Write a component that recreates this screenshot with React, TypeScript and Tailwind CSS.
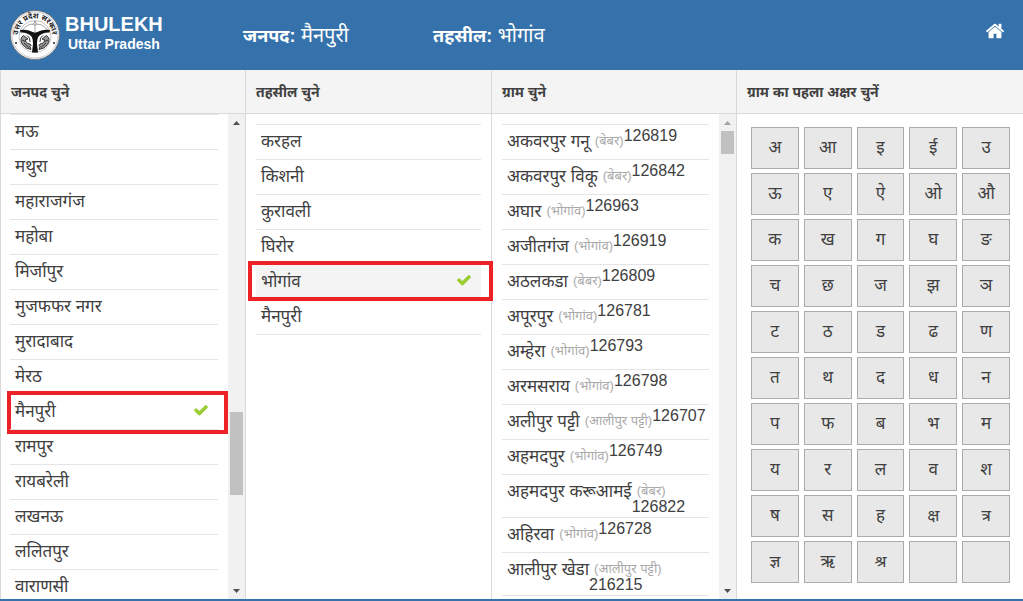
import { clsx } from 'clsx';

const districts = [
  'मऊ',
  'मथुरा',
  'महाराजगंज',
  'महोबा',
  'मिर्जापुर',
  'मुजफफर नगर',
  'मुरादाबाद',
  'मेरठ',
  'मैनपुरी',
  'रामपुर',
  'रायबरेली',
  'लखनऊ',
  'ललितपुर',
  'वाराणसी',
];

const tehsils = ['करहल', 'किशनी', 'कुरावली', 'घिरोर', 'भोगांव', 'मैनपुरी'];

const villages = [
  { name: 'अकवरपुर गनू', area: 'बेबर', code: '126819' },
  { name: 'अकवरपुर विकू', area: 'बेबर', code: '126842' },
  { name: 'अघार', area: 'भोगांव', code: '126963' },
  { name: 'अजीतगंज', area: 'भोगांव', code: '126919' },
  { name: 'अठलकडा', area: 'बेबर', code: '126809' },
  { name: 'अपूरपुर', area: 'भोगांव', code: '126781' },
  { name: 'अम्हेरा', area: 'भोगांव', code: '126793' },
  { name: 'अरमसराय', area: 'भोगांव', code: '126798' },
  { name: 'अलीपुर पट्टी', area: 'आलीपुर पट्टी', code: '126707' },
  { name: 'अहमदपुर', area: 'भोगांव', code: '126749' },
  { name: 'अहमदपुर करूआमई', area: 'बेबर', code: '126822' },
  { name: 'अहिरवा', area: 'भोगांव', code: '126728' },
  { name: 'आलीपुर खेडा', area: 'आलीपुर पट्टी', code: '216215' },
];

const letters = [
  'अ', 'आ', 'इ', 'ई', 'उ',
  'ऊ', 'ए', 'ऐ', 'ओ', 'औ',
  'क', 'ख', 'ग', 'घ', 'ङ',
  'च', 'छ', 'ज', 'झ', 'ञ',
  'ट', 'ठ', 'ड', 'ढ', 'ण',
  'त', 'थ', 'द', 'ध', 'न',
  'प', 'फ', 'ब', 'भ', 'म',
  'य', 'र', 'ल', 'व', 'श',
  'ष', 'स', 'ह', 'क्ष', 'त्र',
  'ज्ञ', 'ऋ', 'श्र', '', '',
];

function Emblem() {
  return (
    <svg viewBox="0 0 100 100" className="size-[50px] shrink-0" aria-hidden="true">
      <defs>
        <path id="emblem-arc" d="M18 62 A34 34 0 1 1 82 62" />
      </defs>
      <circle cx="50" cy="50" r="49" fill="#fff" stroke="#666" strokeWidth="1.5" />
      <circle cx="50" cy="50" r="46" fill="none" stroke="#999" strokeWidth="1" />
      <text fontSize="15" fontWeight="bold" fill="#222">
        <textPath href="#emblem-arc" startOffset="50%" textAnchor="middle">
          उत्तर प्रदेश सरकार
        </textPath>
      </text>
      <circle cx="50" cy="53" r="32" fill="none" stroke="#888" strokeWidth="1" />
      {/* bow and arrow */}
      <path d="M24 42 Q36 24 50 30 Q64 24 76 42" fill="none" stroke="#888" strokeWidth="1.5" />
      <path d="M50 22 V44 M46 28 L50 22 L54 28" fill="none" stroke="#888" strokeWidth="1.5" />
      {/* confluence */}
      <path
        d="M20 40 Q34 38 43 43 Q50 47 57 43 Q66 38 80 40 L79 45 Q66 44 58 52 Q54 56 54 68 L56 85 H44 L46 68 Q46 56 42 52 Q34 44 21 45 Z"
        fill="#111"
      />
      {/* fish */}
      <g fill="#999" stroke="#333" strokeWidth="2">
        <path d="M27 51 Q18 57 25 69 Q32 78 42 79 L40 73 Q44 71 40 68 Q31 67 31 59 L36 58 Z" />
        <path d="M73 51 Q82 57 75 69 Q68 78 58 79 L60 73 Q56 71 60 68 Q69 67 69 59 L64 58 Z" />
        <path d="M34 51 Q41 55 40 64 M66 51 Q59 55 60 64" fill="none" />
        <path d="M28 66 L38 75 M72 66 L62 75 M24 60 L31 63 M76 60 L69 63" fill="none" />
      </g>
      <circle cx="12" cy="66" r="2" fill="#222" />
      <circle cx="88" cy="66" r="2" fill="#222" />
    </svg>
  );
}

function HomeIcon() {
  return (
    <svg viewBox="0 0 1664 1792" className="h-5 w-5" fill="currentColor" aria-hidden="true">
      <path d="M1408 992v480q0 26-19 45t-45 19H960v-384H704v384H320q-26 0-45-19t-19-45V992q0-1 .5-3t.5-3l575-474 575 474q1 2 1 6zm223-69l-62 74q-8 9-21 11h-3q-13 0-21-7L832 424 140 1001q-12 8-24 7-13-2-21-11l-62-74q-8-10-7-23.5T37 878l719-599q32-26 76-26t76 26l244 204V288q0-14 9-23t23-9h192q14 0 23 9t9 23v408l219 182q10 8 11 21.5t-7 23.5z" />
    </svg>
  );
}

function CheckIcon() {
  return (
    <svg viewBox="0 0 1792 1792" className="mb-1 size-4 text-[#9acd32]" fill="currentColor" aria-hidden="true">
      <path d="M1671 566q0 40-28 68l-724 724-136 136q-28 28-68 28t-68-28l-136-136-362-362q-28-28-28-68t28-68l136-136q28-28 68-28t68 28l294 295 656-657q28-28 68-28t68 28l136 136q28 28 28 68z" />
    </svg>
  );
}

function Arrow({ up = false, dim = false }: { up?: boolean; dim?: boolean }) {
  return (
    <svg viewBox="0 0 17 17" className={clsx('size-[17px] shrink-0', dim ? 'text-[#a3a3a3]' : 'text-[#505050]')} fill="currentColor" aria-hidden="true">
      <path d={up ? 'M5 11 L8.5 7 L12 11Z' : 'M5 7 L8.5 11 L12 7Z'} />
    </svg>
  );
}

function ScrollBar({ thumb, atTop = false }: { thumb: string; atTop?: boolean }) {
  return (
    <div className="flex w-[17px] shrink-0 flex-col bg-[#f1f1f1]">
      <Arrow up dim={atTop} />
      <div className="flex-1 px-0.5">
        <div className={clsx('bg-[#c1c1c1]', thumb)} />
      </div>
      <Arrow />
    </div>
  );
}

function Heading({ children }: { children: string }) {
  return (
    <h2 className="flex h-11 shrink-0 items-center border-b border-[#d9d9d9] bg-[#f4f4f4] px-2.5 text-sm font-bold">
      {children}
    </h2>
  );
}

export default function App() {
  return (
    <div className="flex h-screen flex-col border-b-2 border-[#3572ab] bg-white font-['Liberation_Sans','Noto_Sans','Noto_Sans_Devanagari',sans-serif] text-base text-[#404040]">
      <header className="flex h-[70px] shrink-0 items-center bg-[#3572ab] pr-[18px] pl-2.5 text-white">
        <div className="flex w-[233px] items-center gap-[5px]">
          <Emblem />
          <div className="mb-0.5 font-bold">
            <h1 className="text-xl leading-5">BHULEKH</h1>
            <p className="px-[3px] text-sm leading-5">Uttar Pradesh</p>
          </div>
        </div>
        <p className="w-[190px] text-xl">
          <b className="text-lg">जनपद:</b> मैनपुरी
        </p>
        <p className="text-xl">
          <b className="text-lg">तहसील:</b> भोगांव
        </p>
        <a href="#" aria-label="Home" className="mb-2 ml-auto">
          <HomeIcon />
        </a>
      </header>

      <main className="grid min-h-0 flex-1 grid-cols-[245fr_246fr_245fr_287fr] text-[17px]">
        <section className="flex min-h-0 flex-col border-l border-[#d9d9d9]">
          <Heading>जनपद चुने</Heading>
          <div className="flex min-h-0 flex-1">
            <ul className="min-w-0 flex-1 overflow-hidden pr-2.5 pl-[9px]">
              {districts.map((name) => (
                <li key={name} className="relative h-[35px] border-t border-[#e5e5e5]">
                  <button type="button" className="flex h-full w-full items-center justify-between px-[5px] pr-[9px] text-left">
                    {name}
                    {name === 'मैनपुरी' && <CheckIcon />}
                  </button>
                  {name === 'मैनपुरी' && (
                    <span className="pointer-events-none absolute -top-1 -right-2.5 -bottom-[5px] -left-[3px] border-4 border-[#ec2227]" />
                  )}
                </li>
              ))}
            </ul>
            <ScrollBar thumb="mt-[281px] h-[83px]" />
          </div>
        </section>

        <section className="flex min-h-0 flex-col border-l border-[#d9d9d9]">
          <Heading>तहसील चुने</Heading>
          <ul className="flex-1 px-2.5 pt-2.5">
            {tehsils.map((name) => (
              <li key={name} className="relative h-[35px] border-t border-[#e5e5e5] last:h-9 last:border-b">
                <button
                  type="button"
                  className={clsx('flex h-full w-full items-center justify-between px-[5px] pr-[9px] text-left', name === 'भोगांव' && 'bg-[#f4f4f4]')}
                >
                  {name}
                  {name === 'भोगांव' && <CheckIcon />}
                </button>
                {name === 'भोगांव' && (
                  <span className="pointer-events-none absolute -top-1 -right-3 -bottom-0.5 -left-2 z-10 border-4 border-[#ec2227]" />
                )}
              </li>
            ))}
          </ul>
        </section>

        <section className="flex min-h-0 flex-col border-l border-[#d9d9d9]">
          <Heading>ग्राम चुने</Heading>
          <div className="flex min-h-0 flex-1">
            <ul className="min-w-0 flex-1 overflow-hidden px-2.5 pt-2.5">
              {villages.map((v) => (
                <li key={v.code} className="min-h-[35px] border-t border-[#e5e5e5]">
                  <button type="button" className="flex w-full items-start pt-px pl-[5px] text-left">
                    <span className="pt-1 leading-6 whitespace-nowrap">{v.name}</span>
                    <span className="text-base leading-5">
                      <small className="ml-[5px] align-sub text-[13px] leading-none whitespace-nowrap text-[#aaa]">({v.area})</small>
                      <wbr />
                      {v.code}
                    </span>
                  </button>
                </li>
              ))}
              <li className="border-t border-[#e5e5e5]" />
            </ul>
            <ScrollBar thumb="h-[23px]" atTop />
          </div>
        </section>

        <section className="flex min-h-0 flex-col border-l border-[#d9d9d9]">
          <Heading>ग्राम का पहला अक्षर चुनें</Heading>
          <div className="grid grid-cols-5 gap-x-[5px] gap-y-1 pt-[13px] pr-[13px] pl-3.5">
            {letters.map((letter, i) => (
              <button key={i} type="button" className="h-[42px] border border-[#ababab] bg-[#e8e8e8]">
                {letter}
              </button>
            ))}
          </div>
        </section>
      </main>
    </div>
  );
}
